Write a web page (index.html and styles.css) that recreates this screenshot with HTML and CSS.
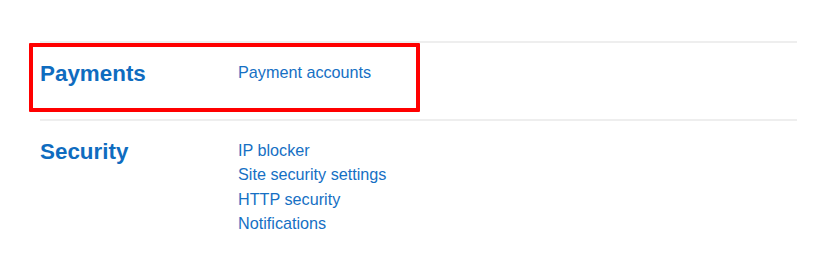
FILE: index.html
```html
<!DOCTYPE html>
<html lang="en">
<head>
<meta charset="utf-8">
<title>Site administration</title>
<link rel="stylesheet" href="styles.css">
</head>
<body>
<div class="page">
  <section class="row">
    <div class="highlight"></div>
    <h4 class="heading">Payments</h4>
    <ul class="links">
      <li><a href="#">Payment accounts</a></li>
    </ul>
  </section>
  <section class="row">
    <h4 class="heading">Security</h4>
    <ul class="links">
      <li><a href="#">IP blocker</a></li>
      <li><a href="#">Site security settings</a></li>
      <li><a href="#">HTTP security</a></li>
      <li><a href="#">Notifications</a></li>
    </ul>
  </section>
</div>
</body>
</html>
```
FILE: styles.css
```css
html, body {
  margin: 0;
  padding: 0;
  background: #ffffff;
}
body {
  font-family: "Liberation Sans", Arial, sans-serif;
  color: #1d2125;
}
.page {
  padding: 41px 33px 0 40px;
}
.row {
  position: relative;
  display: grid;
  grid-template-columns: 198px 1fr;
  border-top: 2px solid #eeeeee;
  padding: 18px 0 32px;
}
.heading {
  margin: 0;
  font-size: 22.4px;
  line-height: 26px;
  font-weight: bold;
  color: #0f6cbf;
}
.links {
  list-style: none;
  margin: -1px 0 0;
  padding: 0;
  font-size: 16.2px;
  line-height: 24.3px;
}
.links a {
  color: #1670c4;
  text-decoration: none;
}
.highlight {
  position: absolute;
  left: -11px;
  top: 0;
  width: 391px;
  height: 69px;
  box-sizing: border-box;
  border: 4px solid #ff0000;
  border-radius: 1px;
}
```
